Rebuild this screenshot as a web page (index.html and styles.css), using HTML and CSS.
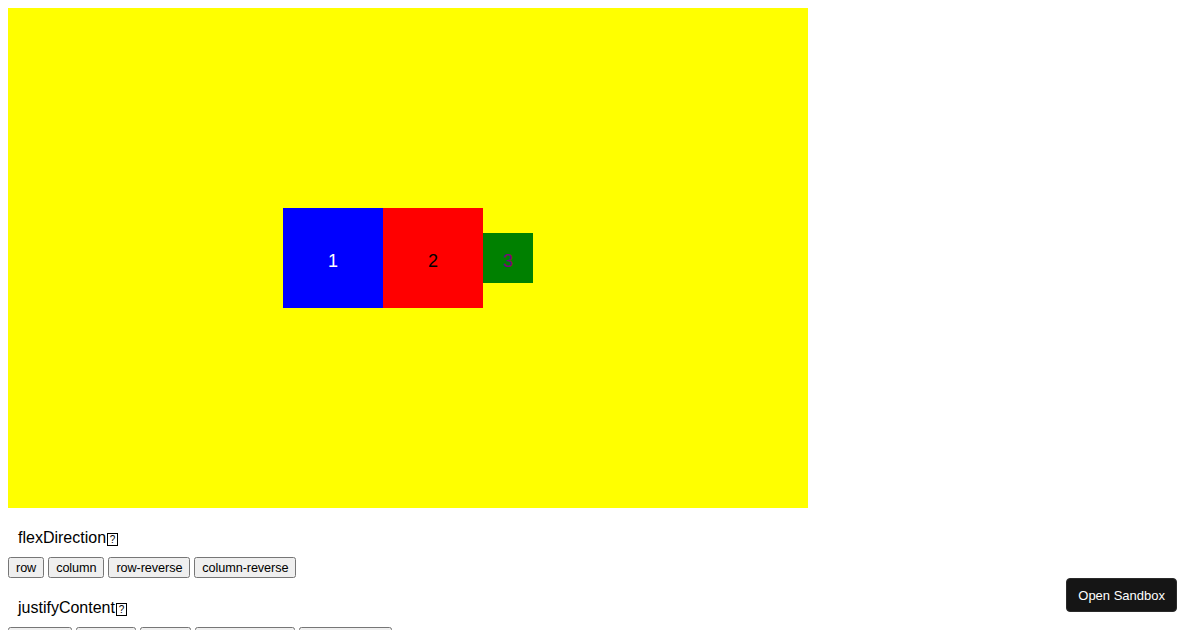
FILE: index.html
```html
<!DOCTYPE html>
<html>
<head>
<meta charset="utf-8">
<link rel="stylesheet" href="styles.css">
</head>
<body>
<div class="stage">
  <div class="item item-1"><span class="num">1</span></div>
  <div class="item item-2"><span class="num">2</span></div>
  <div class="item item-3"><span class="num">3</span></div>
</div>
<div class="control">
  <div class="label">flexDirection<span class="tofu">?</span></div>
  <div class="options">
    <button>row</button>
    <button>column</button>
    <button>row-reverse</button>
    <button>column-reverse</button>
  </div>
</div>
<div class="control">
  <div class="label">justifyContent<span class="tofu">?</span></div>
  <div class="options">
    <button>flex-start</button>
    <button>flex-end</button>
    <button>center</button>
    <button>space-between</button>
    <button>space-around</button>
  </div>
</div>
<a class="open-sandbox" href="#">Open Sandbox</a>
</body>
</html>
```

FILE: styles.css
```css
body {
  margin: 8px;
  font-family: "Liberation Sans", Arial, sans-serif;
  color: #000;
  background: #fff;
}

.stage {
  width: 800px;
  height: 500px;
  background: #ffff00;
  display: flex;
  justify-content: center;
  align-items: center;
}

.item {
  display: flex;
  justify-content: center;
  align-items: center;
  font-size: 18px;
}

.num {
  padding-top: 6px;
}

.item-1 {
  width: 100px;
  height: 100px;
  background: #0000ff;
  color: #fff;
}

.item-2 {
  width: 100px;
  height: 100px;
  background: #ff0000;
  color: #000;
}

.item-3 {
  width: 50px;
  height: 50px;
  background: #008000;
  color: #800080;
}

.label {
  font-size: 16px;
  line-height: 18px;
  padding: 21px 10px 10px;
}

.tofu {
  display: inline-block;
  box-sizing: border-box;
  width: 11px;
  height: 13px;
  margin-left: 1px;
  border: 1px solid #000;
  font-size: 10px;
  line-height: 11px;
  text-align: center;
  vertical-align: 0;
}

.options {
  display: flex;
  gap: 4px;
}

.options button {
  font-family: "Liberation Sans", Arial, sans-serif;
  font-size: 12.7px;
  letter-spacing: -0.1px;
  margin: 0;
  padding: 1px 6px;
  height: 21px;
}

.open-sandbox {
  position: fixed;
  right: 23px;
  bottom: 18px;
  height: 34px;
  padding: 0 11px;
  display: flex;
  align-items: center;
  background: #151515;
  color: #fff;
  font-size: 13px;
  text-decoration: none;
  border-radius: 4px;
  border: 1px solid #2a2a2a;
  box-sizing: border-box;
}
```
